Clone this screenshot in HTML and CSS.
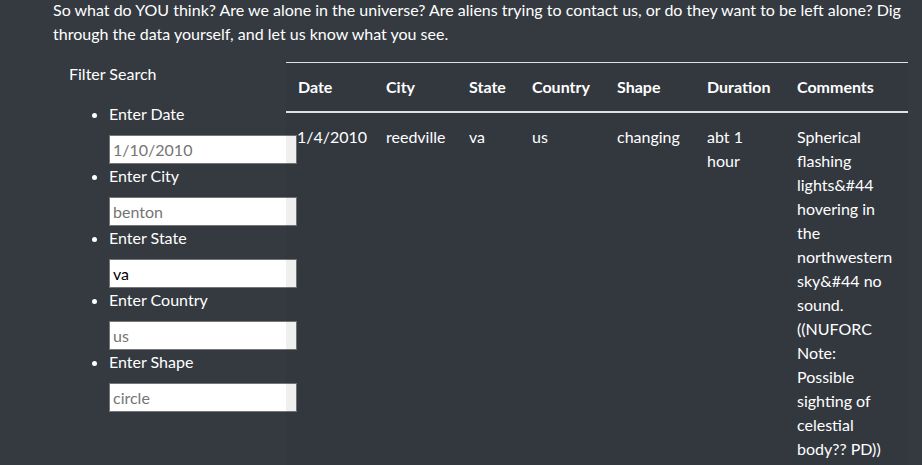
FILE: index.html
```html
<!DOCTYPE html>
<html lang="en">
<head>
<meta charset="utf-8">
<title>UFO Sightings</title>
<link rel="stylesheet" href="styles.css">
</head>
<body>
<div class="page">
  <p class="intro">So what do YOU think? Are we alone in the universe? Are aliens trying to contact us, or do they want to be left alone? Dig through the data yourself, and let us know what you see.</p>
  <div class="layout">
    <aside class="filters">
      <div class="filter-title">Filter Search</div>
      <ul class="filter-list">
        <li><label for="datetime">Enter Date</label><input class="filter-input" id="datetime" type="text" placeholder="1/10/2010"></li>
        <li><label for="city">Enter City</label><input class="filter-input" id="city" type="text" placeholder="benton"></li>
        <li><label for="state">Enter State</label><input class="filter-input" id="state" type="text" value="va"></li>
        <li><label for="country">Enter Country</label><input class="filter-input" id="country" type="text" placeholder="us"></li>
        <li><label for="shape">Enter Shape</label><input class="filter-input" id="shape" type="text" placeholder="circle"></li>
      </ul>
    </aside>
    <div class="results">
      <table class="ufo-table">
        <colgroup>
          <col class="c-date"><col class="c-city"><col class="c-state"><col class="c-country"><col class="c-shape"><col class="c-duration"><col class="c-comments">
        </colgroup>
        <thead>
          <tr><th>Date</th><th>City</th><th>State</th><th>Country</th><th>Shape</th><th>Duration</th><th>Comments</th></tr>
        </thead>
        <tbody>
          <tr>
            <td>1/4/2010</td><td>reedville</td><td>va</td><td>us</td><td>changing</td><td>abt 1 hour</td>
            <td>Spherical flashing lights&amp;#44 hovering in the northwestern sky&amp;#44 no sound. ((NUFORC Note: Possible sighting of celestial body?? PD))</td>
          </tr>
        </tbody>
      </table>
    </div>
  </div>
</div>
</body>
</html>
```
FILE: styles.css
```css
html, body {
  margin: 0;
  padding: 0;
  background: #343a40;
}
body {
  font-family: "Segoe UI", Lato, "Liberation Sans", sans-serif;
  font-size: 16px;
  line-height: 24px;
  color: #ffffff;
}
.page {
  width: 855px;
  padding-left: 53px;
  margin-top: -2px;
}
.intro {
  margin: 0 0 16px 0;
}
.layout {
  display: grid;
  grid-template-columns: 233px 622px;
}
.filters {
  padding-left: 16px;
}
.filter-title {
  line-height: 24px;
}
.filter-list {
  margin: 16px 0 0 0;
  padding-left: 40px;
}
.filter-list li label {
  display: block;
}
.filter-input {
  display: block;
  box-sizing: border-box;
  width: 188px;
  height: 29px;
  margin: 9px 0 0 0;
  padding: 1px 3px;
  border: 1px solid #767676;
  background: #ffffff;
  color: #000000;
  font-family: inherit;
  font-size: 16px;
}
.filter-input::placeholder {
  color: #757575;
}
.results {
  position: relative;
  background: rgba(40, 44, 50, 0.075);
}
.ufo-table {
  width: 622px;
  table-layout: fixed;
  border-collapse: collapse;
}
.c-date { width: 88px; }
.c-city { width: 83px; }
.c-state { width: 63px; }
.c-country { width: 85px; }
.c-shape { width: 90px; }
.c-duration { width: 90px; }
.c-comments { width: 123px; }
.ufo-table th,
.ufo-table td {
  padding: 12px 12px;
  text-align: left;
  vertical-align: top;
  font-weight: normal;
}
.ufo-table th {
  font-weight: bold;
  border-top: 1px solid #dee2e6;
  border-bottom: 2px solid #dee2e6;
}
.ufo-table td:first-child {
  padding-left: 11px;
}
```
